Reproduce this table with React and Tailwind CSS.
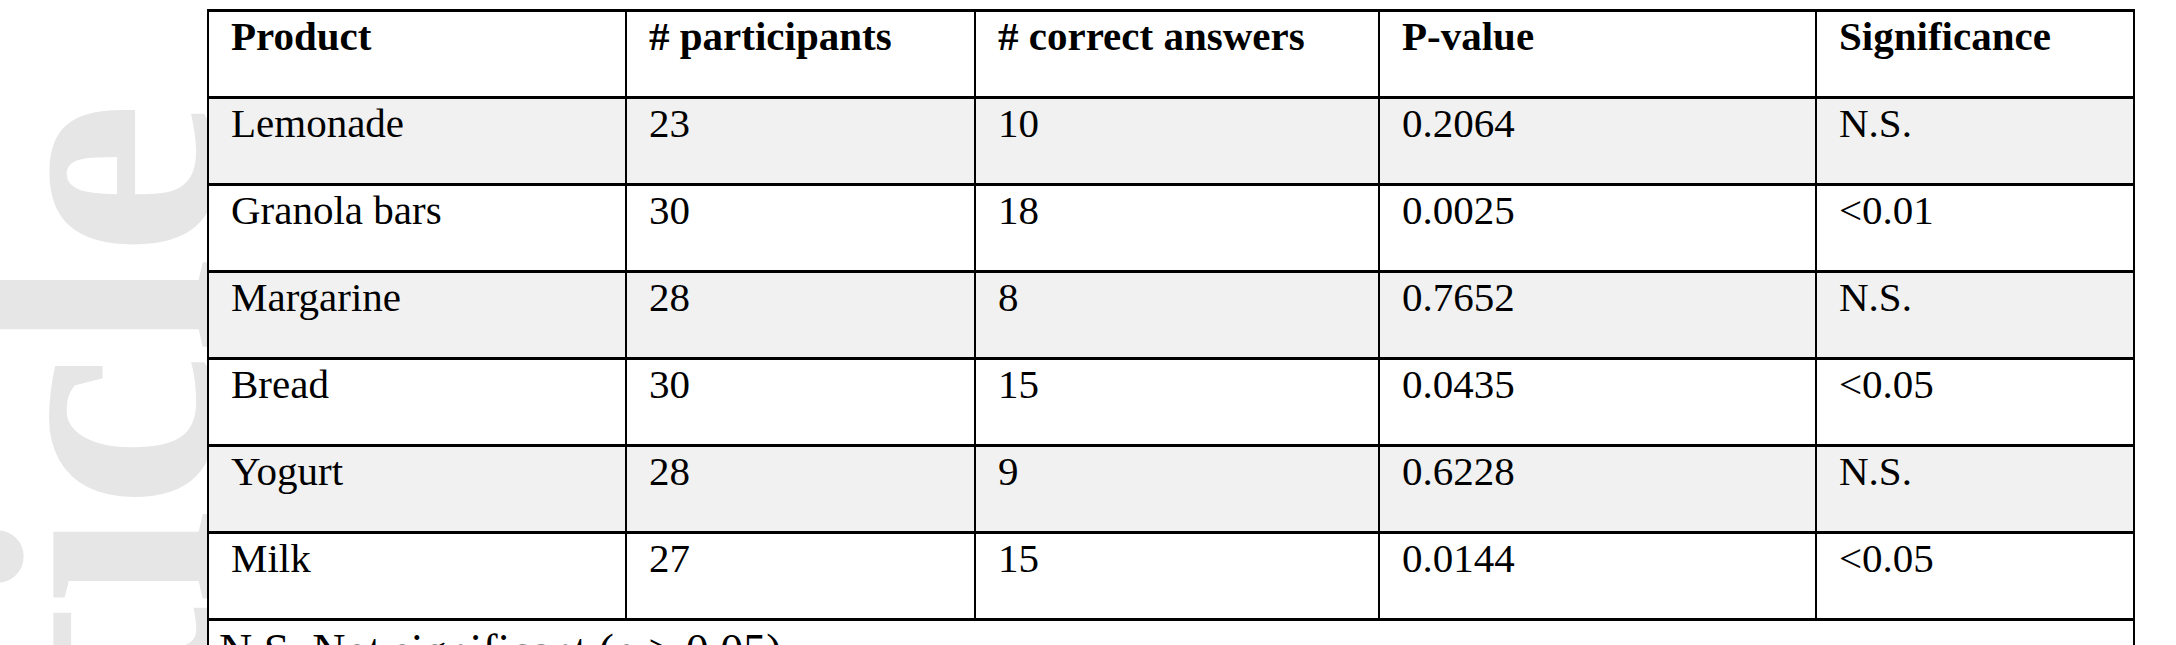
const columns = [
  { label: "Product", width: "w-[418px]" },
  { label: "# participants", width: "w-[349px]" },
  { label: "# correct answers", width: "w-[404px]" },
  { label: "P-value", width: "w-[437px]" },
  { label: "Significance", width: "w-[318px]" },
];

const rows = [
  ["Lemonade", "23", "10", "0.2064", "N.S."],
  ["Granola bars", "30", "18", "0.0025", "<0.01"],
  ["Margarine", "28", "8", "0.7652", "N.S."],
  ["Bread", "30", "15", "0.0435", "<0.05"],
  ["Yogurt", "28", "9", "0.6228", "N.S."],
  ["Milk", "27", "15", "0.0144", "<0.05"],
];

function Row({ cells, bold, shaded }) {
  return (
    <div
      className={`flex h-[87px] border-t-[3px] border-black ${
        shaded ? "bg-[#f1f1f1]" : "bg-white"
      }`}
    >
      {cells.map((text, i) => (
        <div
          key={i}
          className={`${columns[i].width} shrink-0 border-r-2 border-black pl-[22px] pt-[4px] ${
            bold ? "font-bold" : ""
          }`}
        >
          {text}
        </div>
      ))}
    </div>
  );
}

export default function App() {
  return (
    <div className="relative h-[645px] w-[2176px] overflow-hidden bg-white">
      {/* watermark */}
      <div
        className="pointer-events-none absolute left-[-79px] top-[101px] origin-top-left whitespace-nowrap text-[350px] font-bold leading-none text-[#e6e6e6] [transform:rotate(-90deg)_translateX(-100%)]"
        style={{ fontFamily: '"Liberation Serif", serif' }}
      >
        Accepted Article
      </div>

      <div
        className="relative pl-[207px] pt-[9px] text-[41px] leading-[41px] text-black"
        style={{ fontFamily: '"Liberation Serif", "Times New Roman", serif' }}
      >
        <div className="w-[1928px] border-l-2 border-black">
          <Row cells={columns.map((c) => c.label)} bold />
          {rows.map((r, i) => (
            <Row key={r[0]} cells={r} shaded={i % 2 === 0} />
          ))}
          <div className="h-[120px] border-t-[3px] border-r-2 border-black bg-white pl-[10px] pt-[7px] text-[46px] leading-[46px]">
            N.S. Not significant (p &gt; 0.05)
          </div>
        </div>
      </div>
    </div>
  );
}
